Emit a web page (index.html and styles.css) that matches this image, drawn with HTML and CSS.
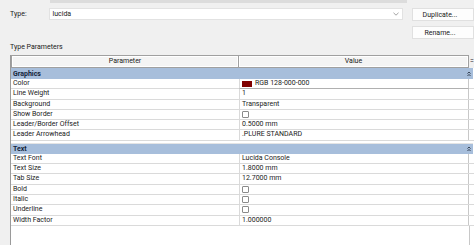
FILE: index.html
```html
<!DOCTYPE html>
<html lang="en">
<head>
  <meta charset="UTF-8" />
  <title>Type Properties</title>
  <link rel="stylesheet" href="styles.css">
</head>
<body>

<div class="top-strip"></div>

<!-- Type selector and buttons -->
<div class="type-row">
  <div class="type-label">Type:</div>
  <div class="type-select">
    <span>lucida</span>
    <svg class="chevron" width="6" height="4" viewBox="0 0 6 4"><path d="M0.5 0.8 L3 3.2 L5.5 0.8" fill="none" stroke="#8a8a8a" stroke-width="0.8"/></svg>
  </div>
  <div class="btn-col">
    <button class="btn">Duplicate...</button>
    <button class="btn">Rename...</button>
  </div>
</div>

<div class="section-label">Type Parameters</div>

<!-- Parameters grid -->
<div class="grid">
  <div class="grid-head">
    <div class="head-cell">Parameter</div>
    <div class="head-cell">Value</div>
    <div class="head-side">=</div>
  </div>

  <div class="group">
    <span>Graphics</span>
    <svg class="collapse" width="4" height="6" viewBox="0 0 4 6"><path d="M0.5 2.6 L2 1 L3.5 2.6 M0.5 5 L2 3.4 L3.5 5" fill="none" stroke="#2a3545" stroke-width="0.9"/></svg>
  </div>
  <div class="row">
    <div class="cell">Color</div>
    <div class="cell value color-value"><span class="swatch"></span>RGB 128-000-000</div>
  </div>
  <div class="row">
    <div class="cell">Line Weight</div>
    <div class="cell value">1</div>
  </div>
  <div class="row">
    <div class="cell">Background</div>
    <div class="cell value">Transparent</div>
  </div>
  <div class="row">
    <div class="cell">Show Border</div>
    <div class="cell value"><span class="check"></span></div>
  </div>
  <div class="row">
    <div class="cell">Leader/Border Offset</div>
    <div class="cell value">0.5000 mm</div>
  </div>
  <div class="row">
    <div class="cell">Leader Arrowhead</div>
    <div class="cell value">.PLURE STANDARD</div>
  </div>

  <div class="group group-gap">
    <span>Text</span>
    <svg class="collapse" width="4" height="6" viewBox="0 0 4 6"><path d="M0.5 2.6 L2 1 L3.5 2.6 M0.5 5 L2 3.4 L3.5 5" fill="none" stroke="#2a3545" stroke-width="0.9"/></svg>
  </div>
  <div class="row">
    <div class="cell">Text Font</div>
    <div class="cell value">Lucida Console</div>
  </div>
  <div class="row">
    <div class="cell">Text Size</div>
    <div class="cell value">1.8000 mm</div>
  </div>
  <div class="row">
    <div class="cell">Tab Size</div>
    <div class="cell value">12.7000 mm</div>
  </div>
  <div class="row">
    <div class="cell">Bold</div>
    <div class="cell value"><span class="check"></span></div>
  </div>
  <div class="row">
    <div class="cell">Italic</div>
    <div class="cell value"><span class="check"></span></div>
  </div>
  <div class="row">
    <div class="cell">Underline</div>
    <div class="cell value"><span class="check"></span></div>
  </div>
  <div class="row">
    <div class="cell">Width Factor</div>
    <div class="cell value">1.000000</div>
  </div>
  <div class="filler"></div>
</div>

</body>
</html>
```

FILE: styles.css
```css
* {
  margin: 0;
  padding: 0;
  box-sizing: border-box;
}

body {
  background: #f0f0f0;
  font-family: Roboto, sans-serif;
  font-size: 7px;
  color: #1a1a1a;
  width: 474px;
  height: 245px;
  overflow: hidden;
}

.top-strip {
  margin-left: 50px;
  width: 357px;
  height: 3px;
  background: #dcdcdc;
}

.type-row {
  display: flex;
  align-items: flex-start;
  margin-top: 5px;
}

.type-label {
  width: 50px;
  padding-left: 10px;
  line-height: 12px;
}

.type-select {
  width: 358px;
  height: 12px;
  background: #fff;
  border: 1px solid #e2e2e2;
  display: flex;
  align-items: center;
  justify-content: space-between;
  padding: 0 3px 0 2px;
}

.btn-col {
  display: flex;
  flex-direction: column;
  gap: 5px;
  margin-left: 9px;
}

.btn {
  width: 62px;
  height: 13px;
  background: #fdfdfd;
  border: 1px solid #e0e0e0;
  font-family: inherit;
  font-size: 7px;
  color: #1a1a1a;
  padding-right: 6px;
}

.section-label {
  margin-top: 2px;
  padding-left: 10px;
  line-height: 12px;
}

.grid {
  margin-top: 2px;
  margin-left: 10px;
  border-left: 1px solid #9a9a9a;
  background: #fff;
  height: 200px;
}

.grid-head {
  display: grid;
  grid-template-columns: 228px 230px 1fr;
  height: 13px;
  background: #f0f0f0;
}

.head-cell {
  border: 1px solid #a0a0a0;
  box-shadow: inset 0 0 0 1px #fff;
  background: #f4f4f4;
  text-align: center;
  line-height: 11px;
}

.head-cell + .head-cell {
  border-left: none;
}

.head-side {
  line-height: 12px;
  padding-left: 1px;
}

.group {
  display: flex;
  justify-content: space-between;
  align-items: center;
  height: 11px;
  width: 462px;
  background: #a7bedb;
  font-weight: bold;
  color: #14243a;
  padding: 0 2px 0 2px;
}

.group-gap {
  margin-top: 2px;
  border-top: 1px solid #e4e4e4;
}

.row {
  display: grid;
  grid-template-columns: 228px 230px;
  height: 10.3px;
  border-bottom: 1px solid #dadada;
}

.cell {
  line-height: 9.3px;
  padding-left: 2px;
  white-space: nowrap;
}

.value {
  border-left: 1px solid #dadada;
  border-right: 1px solid #c8c8c8;
  display: flex;
  align-items: center;
}

.color-value {
  border-bottom: 1px solid #b0b0b0;
}

.swatch {
  width: 10px;
  height: 6px;
  background: #800000;
  margin-right: 3px;
}

.check {
  width: 7px;
  height: 7px;
  border: 1px solid #8a8a8a;
  border-radius: 1px;
  background: #fff;
}

.filler {
  width: 459px;
  height: 20px;
  border-right: 1px solid #c8c8c8;
}
```
